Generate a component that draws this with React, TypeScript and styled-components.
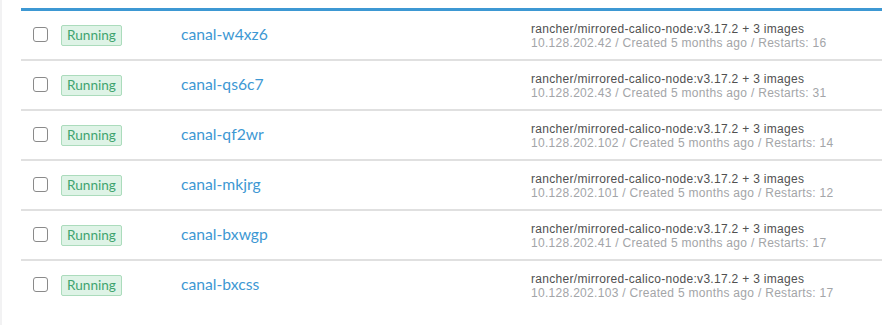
import React from "react";
import styled, { createGlobalStyle } from "styled-components";

const Global = createGlobalStyle`
  html, body { margin: 0; padding: 0; background: #fff; }
  body { font-family: Lato, "Noto Sans", sans-serif; }
`;

const Page = styled.div`
  border-left: 2px solid #f2f2f3;
  padding: 8px 0 0 19px;
  min-height: 325px;
  box-sizing: border-box;
`;

const Table = styled.div`
  border-top: 3px solid #3d98d3;
`;

const Row = styled.div<{ $last?: boolean }>`
  display: grid;
  grid-template-columns: 34px 120px 350px 1fr;
  align-items: center;
  height: 48px;
  border-bottom: 2px solid ${(p) => (p.$last ? "transparent" : "#e0e0e0")};
`;

const Cell = styled.div<{ $pl: number }>`
  padding-left: ${(p) => p.$pl}px;
  display: flex;
  align-items: center;
`;

const Check = styled.span`
  display: block;
  width: 13px;
  height: 13px;
  border: 1px solid #8a8a8a;
  border-radius: 3px;
  margin-top: -2px;
`;

const Badge = styled.span`
  display: inline-flex;
  align-items: center;
  height: 19px;
  padding: 0 5px;
  border: 1px solid #abdcbc;
  background: #def3e6;
  color: #3fa46f;
  font-size: 13.6px;
  border-radius: 2px;
`;

const Name = styled.a`
  color: #3d98d3;
  font-size: 15.7px;
  text-decoration: none;
  margin-top: -2px;
`;

const Info = styled.div`
  display: flex;
  flex-direction: column;
  font-family: "Liberation Sans", Arial, sans-serif;
  font-size: 12px;
  letter-spacing: 0.3px;
  margin-top: 1px;
`;

const Main = styled.div`
  color: #505050;
  line-height: 14px;
  white-space: nowrap;
`;

const Sub = styled.div`
  color: #a3a5a8;
  line-height: 14px;
  white-space: nowrap;
`;

const rows = [
  { name: "canal-w4xz6", ip: "10.128.202.42", restarts: 16 },
  { name: "canal-qs6c7", ip: "10.128.202.43", restarts: 31 },
  { name: "canal-qf2wr", ip: "10.128.202.102", restarts: 14 },
  { name: "canal-mkjrg", ip: "10.128.202.101", restarts: 12 },
  { name: "canal-bxwgp", ip: "10.128.202.41", restarts: 17 },
  { name: "canal-bxcss", ip: "10.128.202.103", restarts: 17 },
];

export default function App() {
  return (
    <>
      <Global />
      <Page>
        <Table>
          {rows.map((r, i) => (
            <Row key={r.name} $last={i === rows.length - 1}>
              <Cell $pl={12}>
                <Check />
              </Cell>
              <Cell $pl={6}>
                <Badge>Running</Badge>
              </Cell>
              <Cell $pl={6}>
                <Name href="#">{r.name}</Name>
              </Cell>
              <Cell $pl={6}>
                <Info>
                  <Main>rancher/mirrored-calico-node:v3.17.2 + 3 images</Main>
                  <Sub>
                    {r.ip} / Created 5 months ago / Restarts: {r.restarts}
                  </Sub>
                </Info>
              </Cell>
            </Row>
          ))}
        </Table>
      </Page>
    </>
  );
}
